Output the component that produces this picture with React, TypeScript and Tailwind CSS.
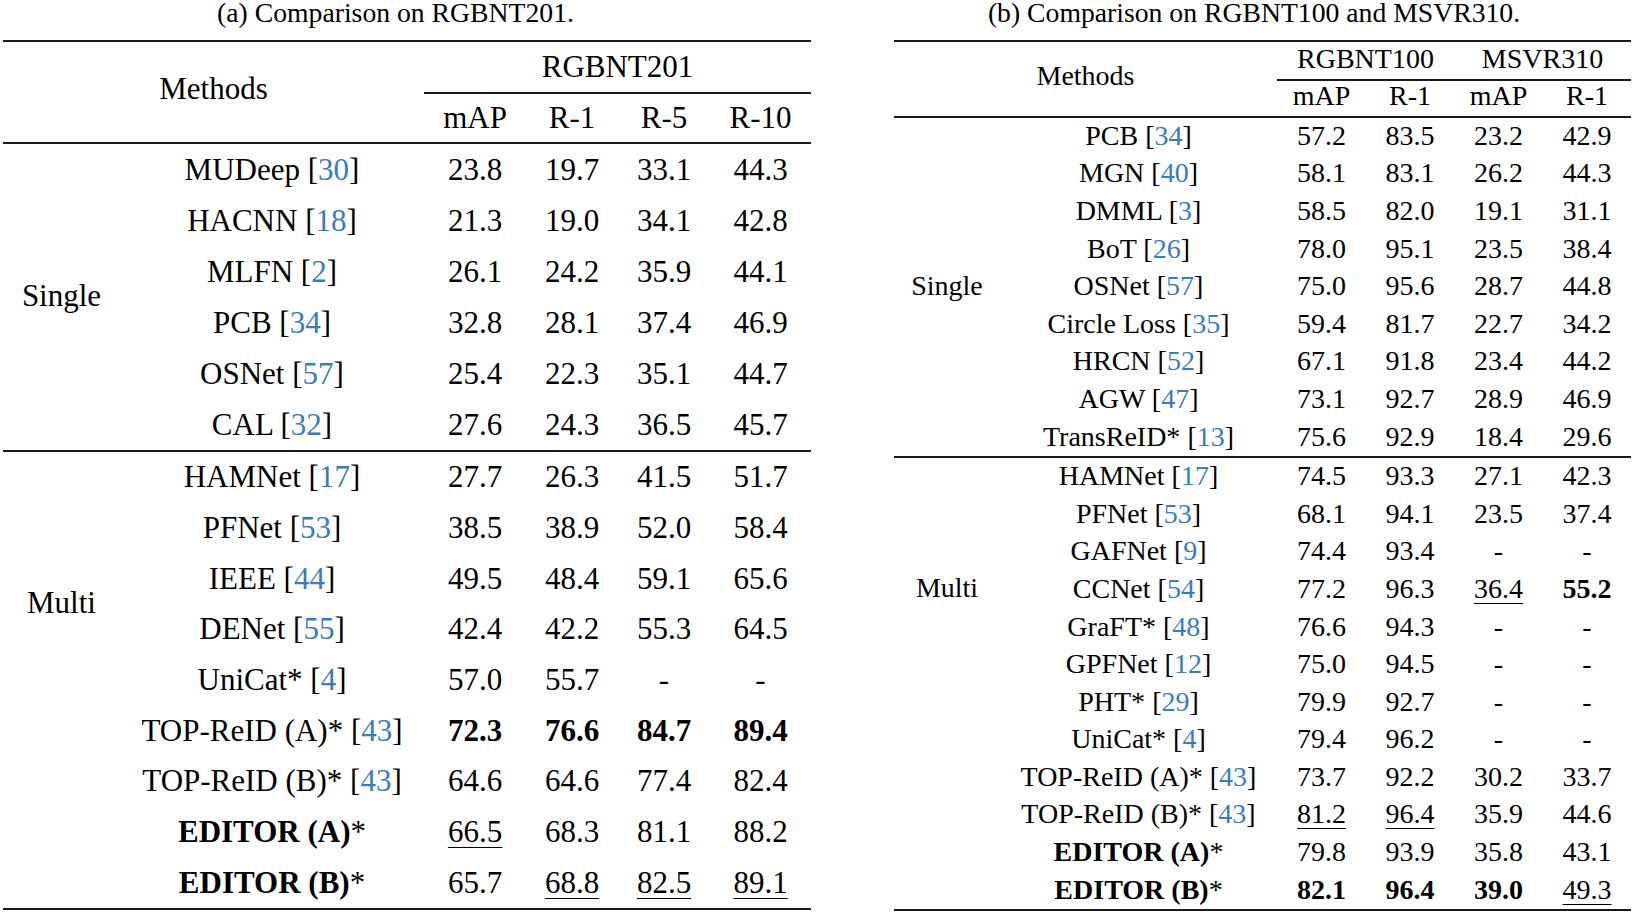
import React from "react";

type M = { n: string; r?: string; b?: boolean };
type Row = { m: M; v: string[] };

const L_SINGLE: Row[] = [
  { m: { n: "MUDeep", r: "30" }, v: ["23.8", "19.7", "33.1", "44.3"] },
  { m: { n: "HACNN", r: "18" }, v: ["21.3", "19.0", "34.1", "42.8"] },
  { m: { n: "MLFN", r: "2" }, v: ["26.1", "24.2", "35.9", "44.1"] },
  { m: { n: "PCB", r: "34" }, v: ["32.8", "28.1", "37.4", "46.9"] },
  { m: { n: "OSNet", r: "57" }, v: ["25.4", "22.3", "35.1", "44.7"] },
  { m: { n: "CAL", r: "32" }, v: ["27.6", "24.3", "36.5", "45.7"] },
];

const L_MULTI: Row[] = [
  { m: { n: "HAMNet", r: "17" }, v: ["27.7", "26.3", "41.5", "51.7"] },
  { m: { n: "PFNet", r: "53" }, v: ["38.5", "38.9", "52.0", "58.4"] },
  { m: { n: "IEEE", r: "44" }, v: ["49.5", "48.4", "59.1", "65.6"] },
  { m: { n: "DENet", r: "55" }, v: ["42.4", "42.2", "55.3", "64.5"] },
  { m: { n: "UniCat*", r: "4" }, v: ["57.0", "55.7", "-", "-"] },
  { m: { n: "TOP-ReID (A)*", r: "43" }, v: ["*72.3", "*76.6", "*84.7", "*89.4"] },
  { m: { n: "TOP-ReID (B)*", r: "43" }, v: ["64.6", "64.6", "77.4", "82.4"] },
  { m: { n: "EDITOR (A)", b: true }, v: ["_66.5", "68.3", "81.1", "88.2"] },
  { m: { n: "EDITOR (B)", b: true }, v: ["65.7", "_68.8", "_82.5", "_89.1"] },
];

const R_SINGLE: Row[] = [
  { m: { n: "PCB", r: "34" }, v: ["57.2", "83.5", "23.2", "42.9"] },
  { m: { n: "MGN", r: "40" }, v: ["58.1", "83.1", "26.2", "44.3"] },
  { m: { n: "DMML", r: "3" }, v: ["58.5", "82.0", "19.1", "31.1"] },
  { m: { n: "BoT", r: "26" }, v: ["78.0", "95.1", "23.5", "38.4"] },
  { m: { n: "OSNet", r: "57" }, v: ["75.0", "95.6", "28.7", "44.8"] },
  { m: { n: "Circle Loss", r: "35" }, v: ["59.4", "81.7", "22.7", "34.2"] },
  { m: { n: "HRCN", r: "52" }, v: ["67.1", "91.8", "23.4", "44.2"] },
  { m: { n: "AGW", r: "47" }, v: ["73.1", "92.7", "28.9", "46.9"] },
  { m: { n: "TransReID*", r: "13" }, v: ["75.6", "92.9", "18.4", "29.6"] },
];

const R_MULTI: Row[] = [
  { m: { n: "HAMNet", r: "17" }, v: ["74.5", "93.3", "27.1", "42.3"] },
  { m: { n: "PFNet", r: "53" }, v: ["68.1", "94.1", "23.5", "37.4"] },
  { m: { n: "GAFNet", r: "9" }, v: ["74.4", "93.4", "-", "-"] },
  { m: { n: "CCNet", r: "54" }, v: ["77.2", "96.3", "_36.4", "*55.2"] },
  { m: { n: "GraFT*", r: "48" }, v: ["76.6", "94.3", "-", "-"] },
  { m: { n: "GPFNet", r: "12" }, v: ["75.0", "94.5", "-", "-"] },
  { m: { n: "PHT*", r: "29" }, v: ["79.9", "92.7", "-", "-"] },
  { m: { n: "UniCat*", r: "4" }, v: ["79.4", "96.2", "-", "-"] },
  { m: { n: "TOP-ReID (A)*", r: "43" }, v: ["73.7", "92.2", "30.2", "33.7"] },
  { m: { n: "TOP-ReID (B)*", r: "43" }, v: ["_81.2", "_96.4", "35.9", "44.6"] },
  { m: { n: "EDITOR (A)", b: true }, v: ["79.8", "93.9", "35.8", "43.1"] },
  { m: { n: "EDITOR (B)", b: true }, v: ["*82.1", "*96.4", "*39.0", "_49.3"] },
];

function Method({ m }: { m: M }) {
  if (m.b) {
    return (
      <span className="whitespace-nowrap">
        <span className="font-bold">{m.n}</span>*
      </span>
    );
  }
  return (
    <span className="whitespace-nowrap">
      {m.n} [<span className="text-[#3a7abf]">{m.r}</span>]
    </span>
  );
}

function Val({ s }: { s: string }) {
  if (s.startsWith("*")) return <span className="font-bold">{s.slice(1)}</span>;
  if (s.startsWith("_"))
    return (
      <span className="underline decoration-1 underline-offset-[5px]">{s.slice(1)}</span>
    );
  return <span>{s}</span>;
}

function Rule({ thick = true }: { thick?: boolean }) {
  return <div className={thick ? "h-[2px] bg-[#1a1a1a]" : "h-[1.5px] bg-[#1a1a1a]"} />;
}

function LeftTable() {
  const cols = ["w-[102px]", "w-[92px]", "w-[92px]", "w-[101px]"];
  const DataRow = ({ r, h }: { r: Row; h: string }) => (
    <div className={`flex ${h} items-center`}>
      <div className="w-[304px] text-center">
        <Method m={r.m} />
      </div>
      {r.v.map((v, i) => (
        <div key={i} className={`${cols[i]} text-center`}>
          <Val s={v} />
        </div>
      ))}
    </div>
  );
  return (
    <div className="w-[808px] ml-[3px] shrink-0">
      <div className="h-[40px] w-[785px] text-center text-[27.7px] leading-[26px] whitespace-nowrap">
        (a) Comparison on RGBNT201.
      </div>
      <div className="text-[31px] leading-[34px]">
        <Rule />
        <div className="flex h-[100px]">
          <div className="w-[421px] flex items-center justify-center pb-[6px]">Methods</div>
          <div className="w-[387px] flex flex-col">
            <div className="h-[50px] flex items-center justify-center">RGBNT201</div>
            <Rule thick={false} />
            <div className="h-[48.5px] flex items-center">
              {["mAP", "R-1", "R-5", "R-10"].map((c, i) => (
                <div key={c} className={`${cols[i]} text-center`}>
                  {c}
                </div>
              ))}
            </div>
          </div>
        </div>
        <Rule />
        <div className="flex">
          <div className="w-[117px] flex items-center justify-center pb-[3px]">Single</div>
          <div className="flex flex-col">
            {L_SINGLE.map((r, i) => (
              <DataRow key={i} r={r} h="h-[51px]" />
            ))}
          </div>
        </div>
        <Rule />
        <div className="flex">
          <div className="w-[117px] flex flex-col">
            <div className="h-[304.2px] flex items-center justify-center pb-[3px]">Multi</div>
          </div>
          <div className="flex flex-col">
            {L_MULTI.map((r, i) => (
              <DataRow key={i} r={r} h="h-[50.7px]" />
            ))}
          </div>
        </div>
        <Rule />
      </div>
    </div>
  );
}

function RightTable() {
  const cols = ["w-[89px]", "w-[88px]", "w-[89px]", "w-[88px]"];
  const DataRow = ({ r }: { r: Row }) => (
    <div className="flex h-[37.6px] items-center pb-[2px]">
      <div className="w-[277px] text-center">
        <Method m={r.m} />
      </div>
      {r.v.map((v, i) => (
        <div key={i} className={`${cols[i]} text-center`}>
          <Val s={v} />
        </div>
      ))}
    </div>
  );
  return (
    <div className="w-[737px] ml-[83px] shrink-0">
      <div className="h-[40px] w-[720px] text-center text-[27.7px] leading-[26px] whitespace-nowrap">
        (b) Comparison on RGBNT100 and MSVR310.
      </div>
      <div className="text-[28px] leading-[32px]">
        <Rule />
        <div className="flex h-[74px]">
          <div className="w-[383px] flex items-center justify-center pb-[6px]">Methods</div>
          <div className="w-[354px] flex flex-col">
            <div className="h-[37px] flex items-center pb-[4px]">
              <div className="w-[177px] text-center">RGBNT100</div>
              <div className="w-[177px] text-center">MSVR310</div>
            </div>
            <Rule thick={false} />
            <div className="h-[35.5px] flex items-center pb-[4px]">
              {["mAP", "R-1", "mAP", "R-1"].map((c, i) => (
                <div key={i} className={`${cols[i]} text-center`}>
                  {c}
                </div>
              ))}
            </div>
          </div>
        </div>
        <Rule />
        <div className="flex">
          <div className="w-[106px] flex items-center justify-center pb-[3px]">Single</div>
          <div className="flex flex-col">
            {R_SINGLE.map((r, i) => (
              <DataRow key={i} r={r} />
            ))}
          </div>
        </div>
        <Rule />
        <div className="flex">
          <div className="w-[106px] flex flex-col">
            <div className="h-[263.2px] flex items-center justify-center pb-[3px]">Multi</div>
          </div>
          <div className="flex flex-col">
            {R_MULTI.map((r, i) => (
              <DataRow key={i} r={r} />
            ))}
          </div>
        </div>
        <Rule />
      </div>
    </div>
  );
}

export default function App() {
  return (
    <div className="w-[1634px] h-[915px] bg-white text-black font-['Liberation_Serif',serif] flex overflow-hidden">
      <LeftTable />
      <RightTable />
    </div>
  );
}
